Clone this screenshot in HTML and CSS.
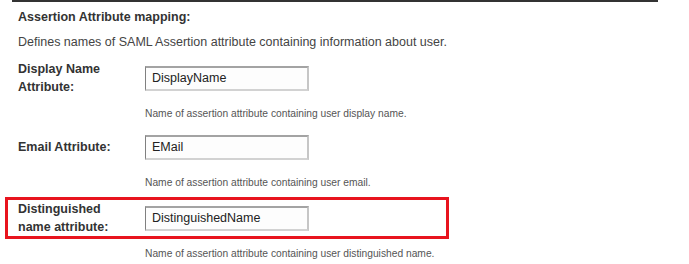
FILE: index.html
```html
<!DOCTYPE html>
<html lang="en">
<head>
    <meta charset="UTF-8">
    <title>Assertion Attribute mapping</title>
    <link rel="stylesheet" href="styles.css">
</head>
<body>
    <div class="section">
        <div class="section-title">Assertion Attribute mapping:</div>
        <div class="section-desc">Defines names of SAML Assertion attribute containing information about user.</div>

        <div class="field-row">
            <label class="field-label" for="displayName">Display Name<br>Attribute:</label>
            <input class="field-input" id="displayName" type="text" value="DisplayName">
        </div>
        <div class="field-help">Name of assertion attribute containing user display name.</div>

        <div class="field-row">
            <label class="field-label" for="email">Email Attribute:</label>
            <input class="field-input" id="email" type="text" value="EMail">
        </div>
        <div class="field-help">Name of assertion attribute containing user email.</div>

        <div class="field-row highlighted">
            <label class="field-label" for="dn">Distinguished<br>name attribute:</label>
            <input class="field-input" id="dn" type="text" value="DistinguishedName">
        </div>
        <div class="field-help">Name of assertion attribute containing user distinguished name.</div>
    </div>
</body>
</html>
```

FILE: styles.css
```css
* { margin: 0; padding: 0; box-sizing: border-box; }
body {
    font-family: "Liberation Sans", Arial, sans-serif;
    font-size: 12.5px;
    color: #333;
    background: #fff;
}
.section {
    margin-left: 12px;
    width: 646px;
    border-top: 2px solid #333;
    padding: 6px 0 0 6px;
}
.section-title {
    font-weight: bold;
    line-height: 19px;
    color: #333;
}
.section-desc {
    margin-top: 6px;
    line-height: 19px;
    color: #444;
}
.field-row {
    display: flex;
    align-items: center;
    min-height: 38px;
    margin-top: 7px;
}
.field-label {
    width: 127px;
    flex-shrink: 0;
    font-weight: bold;
    line-height: 18px;
    color: #333;
}
.field-input {
    width: 164px;
    height: 25px;
    padding: 0 6px;
    font-family: "Liberation Sans", Arial, sans-serif;
    font-size: 12.5px;
    color: #222;
    background: #fdfdfd;
    border-style: solid;
    border-width: 2px 2px 2px 1px;
    border-color: #a3a3a3 #c6c6c6 #d2d2d2 #808080;
    outline: none;
}
.field-help {
    margin: 10px 0 0 127px;
    font-size: 10.25px;
    line-height: 14px;
    color: #555;
}
.field-row.highlighted {
    width: 444px;
    min-height: 42px;
    margin-left: -13px;
    padding-left: 10px;
    border: 3px solid #e8141e;
}
.field-row.highlighted + .field-help {
    margin-top: 8px;
}
```
